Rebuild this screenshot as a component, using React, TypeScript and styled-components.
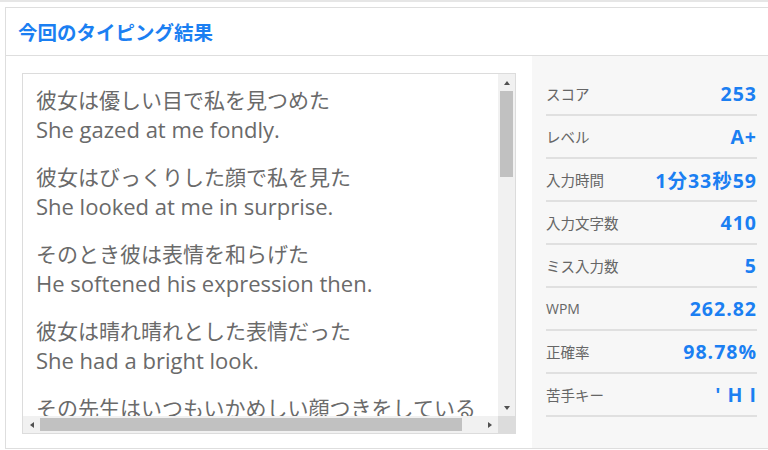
import styled, { createGlobalStyle } from 'styled-components';

const GlobalStyle = createGlobalStyle`
	html, body {
		margin: 0;
		background: #fff;
		overflow: hidden;
	}
	body {
		font-family: "Open Sans", "Noto Sans CJK JP", sans-serif;
	}
`;

const ACCENT = '#1b7ff2';

const TopRule = styled.div`
	height: 2px;
	background: #e6e6e6;
`;

const Card = styled.section`
	margin: 5px 0 0 5px;
	width: 780px;
	border: 1px solid #dedede;
	background: #fff;
`;

const CardHeader = styled.header`
	height: 47px;
	display: flex;
	align-items: center;
	padding-left: 12px;
	border-bottom: 1px solid #dedede;
`;

const Title = styled.h2`
	margin: 0;
	font-family: "Noto Sans CJK JP", sans-serif;
	font-size: 19.5px;
	font-weight: 700;
	color: ${ACCENT};
`;

const CardBody = styled.div`
	display: flex;
	height: 392px;
`;

const Main = styled.div`
	width: 526px;
	box-sizing: border-box;
	padding: 17px 16px 15px;
`;

const ScrollBox = styled.div`
	display: grid;
	grid-template-columns: 1fr 17px;
	grid-template-rows: 1fr 17px;
	height: 361px;
	border: 1px solid #dcdcdc;
	box-sizing: border-box;
`;

const Content = styled.div`
	overflow: hidden;
	white-space: nowrap;
	padding: 10px 13px;
	color: #6a6a6a;
`;

const Sentence = styled.div`
	margin-bottom: 16px;
`;

const Jp = styled.div`
	font-family: "Noto Sans CJK JP", sans-serif;
	font-size: 21px;
	line-height: 30px;
`;

const En = styled.div`
	font-family: "Open Sans", "Noto Sans CJK JP", sans-serif;
	font-size: 22px;
	line-height: 31px;
`;

const VBar = styled.div`
	display: flex;
	flex-direction: column;
	background: #f1f1f1;
`;

const HBar = styled.div`
	display: flex;
	background: #f1f1f1;
`;

const Corner = styled.div`
	background: #dcdcdc;
`;

const ArrowButton = styled.div`
	width: 17px;
	height: 17px;
	flex: none;
	display: flex;
	align-items: center;
	justify-content: center;
`;

const Triangle = styled.span<{ $dir: 'up' | 'down' | 'left' | 'right' }>`
	width: 0;
	height: 0;
	border: 4px solid transparent;
	${({ $dir }) =>
		$dir === 'up'
			? 'border-bottom-color: #505050; border-top-width: 0; border-left-width: 3.5px; border-right-width: 3.5px;'
			: $dir === 'down'
			? 'border-top-color: #505050; border-bottom-width: 0; border-left-width: 3.5px; border-right-width: 3.5px;'
			: $dir === 'left'
			? 'border-right-color: #505050; border-left-width: 0; border-top-width: 3.5px; border-bottom-width: 3.5px;'
			: 'border-left-color: #505050; border-right-width: 0; border-top-width: 3.5px; border-bottom-width: 3.5px;'}
`;

const Track = styled.div<{ $vertical?: boolean }>`
	flex: 1;
	display: flex;
	flex-direction: ${({ $vertical }) => ($vertical ? 'column' : 'row')};
`;

const Thumb = styled.div<{ $vertical?: boolean }>`
	background: #c1c1c1;
	${({ $vertical }) =>
		$vertical ? 'margin: 0 2px 0 2px; height: 86px;' : 'margin: 2px 0; width: 422px;'}
`;

const Side = styled.aside`
	flex: 1;
	background: #f7f7f7;
	padding: 17px 29px 0 14px;
`;

const StatRow = styled.div`
	height: 41px;
	display: flex;
	align-items: center;
	justify-content: space-between;
	border-bottom: 2px solid #e0e0e0;
`;

const Label = styled.span<{ $latin?: boolean }>`
	font-family: ${({ $latin }) =>
		$latin ? '"Open Sans", sans-serif' : '"Noto Sans CJK JP", sans-serif'};
	font-size: ${({ $latin }) => ($latin ? '14px' : '14.5px')};
	color: #666;
`;

const Value = styled.span`
	font-family: "Open Sans", "Noto Sans CJK JP", sans-serif;
	font-size: 19.5px;
	font-weight: 700;
	letter-spacing: 1px;
	color: ${ACCENT};
	white-space: pre;
`;

const sentences = [
	['彼女は優しい目で私を見つめた', 'She gazed at me fondly.'],
	['彼女はびっくりした顔で私を見た', 'She looked at me in surprise.'],
	['そのとき彼は表情を和らげた', 'He softened his expression then.'],
	['彼女は晴れ晴れとした表情だった', 'She had a bright look.'],
	['その先生はいつもいかめしい顔つきをしている', 'That teacher always wears a stern look.'],
];

const stats: { label: string; value: string; latin?: boolean }[] = [
	{ label: 'スコア', value: '253' },
	{ label: 'レベル', value: 'A+' },
	{ label: '入力時間', value: '1分33秒59' },
	{ label: '入力文字数', value: '410' },
	{ label: 'ミス入力数', value: '5' },
	{ label: 'WPM', value: '262.82', latin: true },
	{ label: '正確率', value: '98.78%' },
	{ label: '苦手キー', value: "' H I" },
];

function App() {
	return (
		<>
			<GlobalStyle />
			<TopRule />
			<Card>
				<CardHeader>
					<Title>今回のタイピング結果</Title>
				</CardHeader>
				<CardBody>
					<Main>
						<ScrollBox>
							<Content>
								{sentences.map(([jp, en]) => (
									<Sentence key={jp}>
										<Jp>{jp}</Jp>
										<En>{en}</En>
									</Sentence>
								))}
							</Content>
							<VBar>
								<ArrowButton>
									<Triangle $dir="up" />
								</ArrowButton>
								<Track $vertical>
									<Thumb $vertical />
								</Track>
								<ArrowButton>
									<Triangle $dir="down" />
								</ArrowButton>
							</VBar>
							<HBar>
								<ArrowButton>
									<Triangle $dir="left" />
								</ArrowButton>
								<Track>
									<Thumb />
								</Track>
								<ArrowButton>
									<Triangle $dir="right" />
								</ArrowButton>
							</HBar>
							<Corner />
						</ScrollBox>
					</Main>
					<Side>
						{stats.map((s) => (
							<StatRow key={s.label}>
								<Label $latin={s.latin}>{s.label}</Label>
								<Value>{s.value}</Value>
							</StatRow>
						))}
					</Side>
				</CardBody>
			</Card>
		</>
	);
}

export default App;
